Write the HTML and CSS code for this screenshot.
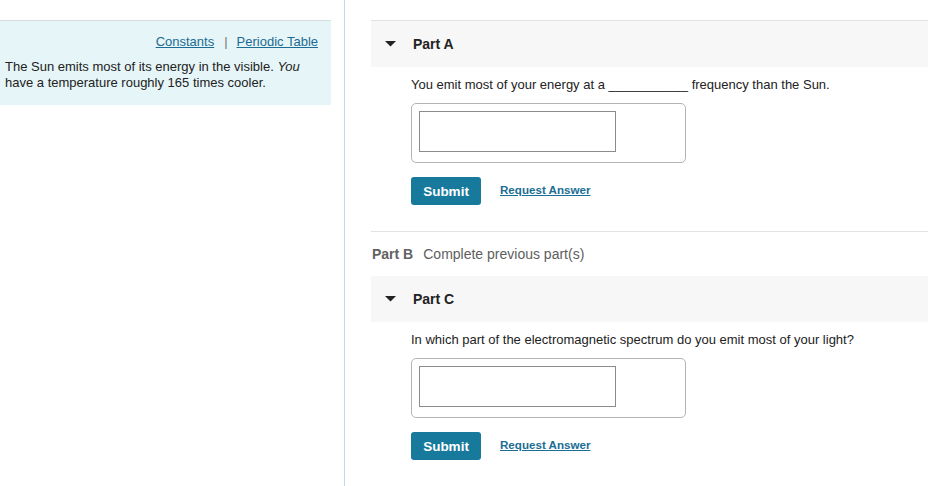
FILE: index.html
```html
<!DOCTYPE html>
<html lang="en">
<head>
<meta charset="utf-8">
<title>Parts</title>
<link rel="stylesheet" href="styles.css">
</head>
<body>
<div class="page">
  <aside class="left">
    <div class="info">
      <div class="links"><a href="#">Constants</a><span class="sep">|</span><a href="#">Periodic Table</a></div>
      <p class="intro">The Sun emits most of its energy in the visible. <em>You</em> have a temperature roughly 165 times cooler.</p>
    </div>
  </aside>
  <div class="divider"></div>
  <main class="right">
    <section class="part first">
      <div class="part-head">
        <svg class="caret" width="11" height="6" viewBox="0 0 11 6"><polygon points="0,0 11,0 5.5,5.5" fill="#222"/></svg>
        <span class="part-label">Part A</span>
      </div>
      <div class="part-body">
        <p class="question">You emit most of your energy at a ___________ frequency than the Sun.</p>
        <div class="answer-box"><div class="answer-input"></div></div>
        <div class="actions">
          <button class="submit">Submit</button>
          <a href="#" class="request">Request Answer</a>
        </div>
      </div>
    </section>
    <div class="part-b"><span class="pb-label">Part B</span><span class="pb-note">Complete previous part(s)</span></div>
    <section class="part">
      <div class="part-head">
        <svg class="caret" width="11" height="6" viewBox="0 0 11 6"><polygon points="0,0 11,0 5.5,5.5" fill="#222"/></svg>
        <span class="part-label">Part C</span>
      </div>
      <div class="part-body last">
        <p class="question">In which part of the electromagnetic spectrum do you emit most of your light?</p>
        <div class="answer-box"><div class="answer-input"></div></div>
        <div class="actions">
          <button class="submit">Submit</button>
          <a href="#" class="request">Request Answer</a>
        </div>
      </div>
    </section>
  </main>
</div>
</body>
</html>
```

FILE: styles.css
```css
html, body {
  margin: 0;
  padding: 0;
  background: #fff;
}
body {
  font-family: "Liberation Sans", Arial, Helvetica, sans-serif;
  color: #222;
}
.page {
  display: flex;
  min-height: 486px;
  align-items: stretch;
}
.left {
  width: 331px;
  flex: none;
  padding-top: 20px;
}
.info {
  background: #e6f5f7;
  border-top: 1px solid #d6dde0;
  padding: 13px 13px 14px 5px;
}
.links {
  text-align: right;
  font-size: 13px;
  line-height: 16px;
}
.links a {
  color: #1b6b93;
  text-decoration: underline;
}
.links .sep {
  color: #777;
  margin: 0 9px 0 10px;
}
.intro {
  margin: 9px 0 0;
  font-size: 13px;
  line-height: 16px;
  color: #222;
}
.divider {
  width: 1px;
  flex: none;
  margin-left: 13px;
  background: #c6d6e2;
}
.right {
  flex: 1;
  margin-left: 26px;
  padding-top: 20px;
}
.part.first {
  border-top: 1px solid #e2e2e2;
}
.part-head {
  height: 46px;
  background: #f7f7f7;
  display: flex;
  align-items: center;
  padding-left: 14px;
}
.caret {
  display: block;
  margin-right: 17px;
  margin-top: -1px;
}
.part-label {
  font-size: 14px;
  font-weight: bold;
  color: #222;
}
.part-body {
  padding: 10px 0 26px 40px;
  border-bottom: 1px solid #e2e2e2;
}
.part-body.last {
  border-bottom: none;
}
.question {
  margin: 0;
  font-size: 13px;
  line-height: 16px;
  color: #222;
}
.answer-box {
  margin-top: 10px;
  width: 259px;
  height: 42px;
  padding: 7px 7px 9px 7px;
  border: 1px solid #b4b4b4;
  border-radius: 5px;
}
.answer-input {
  width: 195px;
  height: 39px;
  border: 1px solid #8c8c8c;
  background: #fff;
}
.actions {
  margin-top: 14px;
  display: flex;
  align-items: center;
}
.submit {
  width: 70px;
  height: 28px;
  border: none;
  border-radius: 3px;
  background: #177a9c;
  color: #fff;
  font-family: "Liberation Sans", Arial, Helvetica, sans-serif;
  font-size: 13.5px;
  font-weight: bold;
  padding: 0;
}
.request {
  margin-left: 19px;
  margin-bottom: 3px;
  font-size: 11.6px;
  line-height: 14px;
  font-weight: bold;
  color: #1a6d94;
  text-decoration: underline;
}
.part-b {
  padding: 14px 0 14px 1px;
  font-size: 14px;
  line-height: 16px;
}
.pb-label {
  font-weight: bold;
  color: #626262;
  margin-right: 10px;
}
.pb-note {
  color: #5e5e5e;
}
```
